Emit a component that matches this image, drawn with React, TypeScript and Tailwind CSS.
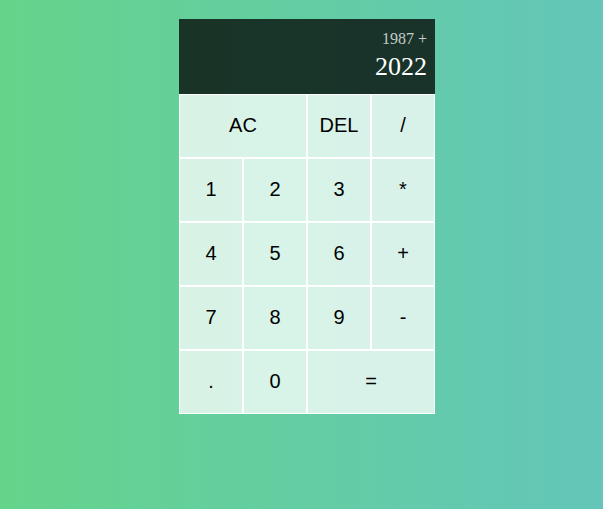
import React from "react";

const Btn = ({ label, wide }: { label: string; wide?: boolean }) => (
  <button
    className={
      (wide ? "col-span-2 " : "") +
      "h-[64px] border border-white bg-white/75 pb-[3px] text-[20px] text-black flex items-center justify-center cursor-pointer"
    }
    style={{ fontFamily: '"Liberation Sans", Arial, sans-serif' }}
  >
    {label}
  </button>
);

export default function App() {
  return (
    <div className="min-h-screen w-full bg-gradient-to-r from-[#65d48a] to-[#63c6b9] pt-[19px] pl-[11px] flex justify-center items-start">
      <div className="grid grid-cols-[repeat(4,64px)] w-[256px]">
        <div
          className="col-span-4 h-[75px] bg-black/75 pt-[11px] pr-[8px] flex flex-col items-end"
          style={{ fontFamily: '"Liberation Serif", "Times New Roman", serif' }}
        >
          <div className="text-[16px] leading-[18px] text-white/75">1987 +</div>
          <div className="mt-[4px] text-[26px] leading-[30px] text-white">2022</div>
        </div>
        <Btn label="AC" wide />
        <Btn label="DEL" />
        <Btn label="/" />
        <Btn label="1" />
        <Btn label="2" />
        <Btn label="3" />
        <Btn label="*" />
        <Btn label="4" />
        <Btn label="5" />
        <Btn label="6" />
        <Btn label="+" />
        <Btn label="7" />
        <Btn label="8" />
        <Btn label="9" />
        <Btn label="-" />
        <Btn label="." />
        <Btn label="0" />
        <Btn label="=" wide />
      </div>
    </div>
  );
}
